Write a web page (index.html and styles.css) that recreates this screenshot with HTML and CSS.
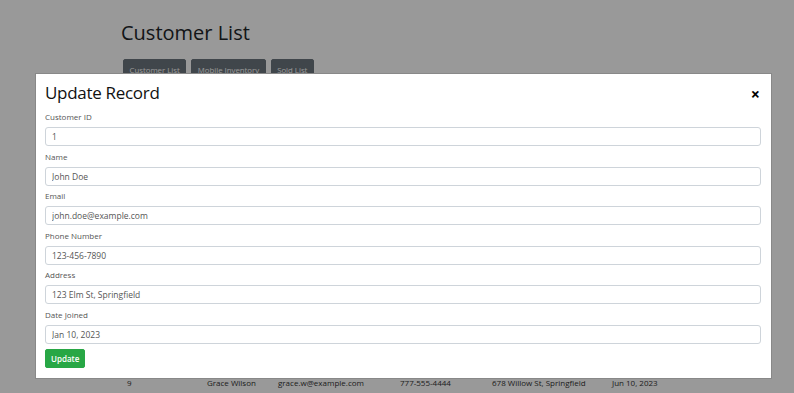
FILE: index.html
```html
<!DOCTYPE html>
<html lang="en">
<head>
    <meta charset="UTF-8">
    <meta name="viewport" content="width=device-width, initial-scale=1.0">
    <title>Customer List</title>
    <link rel="stylesheet" href="styles.css">
</head>
<body>

    <div class="container">
        <h1>Customer List</h1>

        <div class="nav">
            <button class="btn-nav">Customer List</button>
            <button class="btn-nav">Mobile Inventory</button>
            <button class="btn-nav">Sold List</button>
        </div>

        <table class="customers">
            <thead>
                <tr><th>Customer ID</th><th>Name</th><th>Email</th><th>Phone Number</th><th>Address</th><th>Date Joined</th></tr>
            </thead>
            <tbody>
                <tr><td>1</td><td>John Doe</td><td>john.doe@example.com</td><td>123-456-7890</td><td>123 Elm St, Springfield</td><td>Jan 10, 2023</td></tr>
                <tr><td>2</td><td>Jane Smith</td><td>jane.s@example.com</td><td>234-567-8901</td><td>456 Oak St, Springfield</td><td>Feb 12, 2023</td></tr>
                <tr><td>3</td><td>Bob Brown</td><td>bob.b@example.com</td><td>345-678-9012</td><td>789 Pine St, Springfield</td><td>Mar 05, 2023</td></tr>
                <tr><td>4</td><td>Alice Green</td><td>alice.g@example.com</td><td>456-789-0123</td><td>321 Maple St, Springfield</td><td>Apr 01, 2023</td></tr>
                <tr><td>5</td><td>Tom White</td><td>tom.w@example.com</td><td>567-890-1234</td><td>654 Cedar St, Springfield</td><td>Apr 20, 2023</td></tr>
                <tr><td>6</td><td>Emma Black</td><td>emma.b@example.com</td><td>678-901-2345</td><td>987 Birch St, Springfield</td><td>May 02, 2023</td></tr>
                <tr><td>7</td><td>Liam Gray</td><td>liam.g@example.com</td><td>789-012-3456</td><td>147 Ash St, Springfield</td><td>May 15, 2023</td></tr>
                <tr><td>8</td><td>Olivia King</td><td>olivia.k@example.com</td><td>888-555-3333</td><td>258 Spruce St, Springfield</td><td>May 28, 2023</td></tr>
                <tr><td>9</td><td>Grace Wilson</td><td>grace.w@example.com</td><td>777-555-4444</td><td>678 Willow St, Springfield</td><td>Jun 10, 2023</td></tr>
            </tbody>
        </table>
    </div>

    <div class="overlay">
        <div class="modal">
            <div class="modal-header">
                <h2>Update Record</h2>
                <span class="close">&times;</span>
            </div>

            <div class="field-group">
                <label for="cid">Customer ID</label>
                <input type="text" id="cid" value="1">
            </div>
            <div class="field-group">
                <label for="cname">Name</label>
                <input type="text" id="cname" value="John Doe">
            </div>
            <div class="field-group">
                <label for="cemail">Email</label>
                <input type="text" id="cemail" value="john.doe@example.com">
            </div>
            <div class="field-group">
                <label for="cphone">Phone Number</label>
                <input type="text" id="cphone" value="123-456-7890">
            </div>
            <div class="field-group">
                <label for="caddr">Address</label>
                <input type="text" id="caddr" value="123 Elm St, Springfield">
            </div>
            <div class="field-group">
                <label for="cdate">Date Joined</label>
                <input type="text" id="cdate" value="Jan 10, 2023">
            </div>

            <button class="btn-update">Update</button>
        </div>
    </div>

</body>
</html>
```

FILE: styles.css
```css
body {
    margin: 0;
    font-family: "Open Sans", "Noto Sans", sans-serif;
    background-color: white;
    color: #212529;
    overflow: hidden;
}
.container {
    width: 552px;
    margin: 0 auto;
    padding-top: 20px;
}
h1 {
    font-size: 20px;
    font-weight: 400;
    margin: 0 0 13px 0;
    line-height: 26px;
}
.nav {
    display: flex;
    gap: 5px;
    padding-left: 2px;
}
.btn-nav {
    font-family: inherit;
    font-size: 7.8px;
    padding: 4px 5.5px;
    background-color: #6c757d;
    color: white;
    border: 1px solid #6c757d;
    border-radius: 2px;
    line-height: 12px;
}
.customers {
    margin-top: 7px;
    border-collapse: collapse;
    font-size: 8px;
    color: #333;
}
.customers th,
.customers td {
    padding: 0;
    height: 31px;
    text-align: left;
    vertical-align: middle;
}
.customers th:nth-child(1),
.customers td:nth-child(1) { width: 80px; padding-left: 6px; }
.customers td:nth-child(2) { width: 71px; }
.customers td:nth-child(3) { width: 122px; }
.customers td:nth-child(4) { width: 92px; }
.customers td:nth-child(5) { width: 120px; }
.overlay {
    position: fixed;
    inset: 0;
    background-color: rgba(0, 0, 0, 0.4);
}
.modal {
    position: absolute;
    left: 35px;
    top: 73px;
    width: 716px;
    padding: 7px 10px 10px 9px;
    background-color: white;
    border: 1px solid #888;
}
.modal-header {
    display: flex;
    justify-content: space-between;
    align-items: center;
    margin-bottom: 6px;
}
.modal-header h2 {
    font-size: 17px;
    font-weight: 400;
    letter-spacing: -0.3px;
    margin: 0;
    line-height: 24px;
    color: #111;
}
.close {
    font-size: 16px;
    line-height: 1;
    font-weight: 700;
    color: #000;
    margin-right: 1px;
    margin-top: 2px;
}
.field-group label {
    display: block;
    font-size: 8px;
    line-height: 12px;
    color: #555;
    margin-bottom: 4px;
}
.field-group input {
    display: block;
    box-sizing: border-box;
    width: 100%;
    height: 19px;
    padding: 0 6px;
    font-family: inherit;
    font-size: 8.5px;
    color: #555;
    border: 1px solid #ced4da;
    border-radius: 3px;
    margin-bottom: 4.6px;
}
.btn-update {
    display: block;
    margin-top: 1px;
    font-family: inherit;
    font-size: 8px;
    font-weight: 600;
    padding: 0 5px;
    height: 19px;
    background-color: #28a745;
    color: white;
    border: 1px solid #28a745;
    border-radius: 2px;
}
```
